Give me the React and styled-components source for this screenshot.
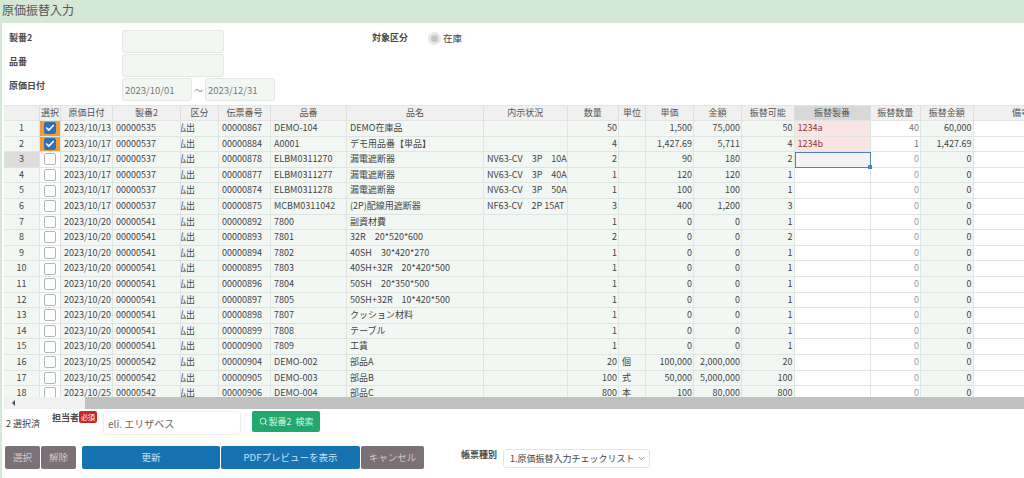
import React from 'react'
import styled, { createGlobalStyle } from 'styled-components'
import { Search, Check, ChevronDown } from 'lucide-react'

const GlobalStyle = createGlobalStyle`
html, body {
  margin: 0;
  padding: 0;
  background: white;
}
body {
  font-family: "Noto Sans CJK JP", "Noto Sans", sans-serif;
  color: #444;
  overflow: hidden;
}
`

const COLUMNS = '36px 21px 52px 68px 38px 52px 76px 137px 83.5px 51.5px 27px 48px 48px 52.5px 76px 50.5px 52.5px 96px'

const Page = styled.div`
  width: 1024px;
  height: 478px;
  overflow: hidden;
`

const TitleBar = styled.div`
  height: 23px;
  padding-left: 2px;
  background: #d5e8d5;
  font-size: 12px;
  line-height: 20px;
  color: #555;
`

const Content = styled.div`
  border-left: 2px solid #d5e8d5;
  height: 455px;
`

const Form = styled.div`
  height: 82px;
  padding-top: 7px;
  box-sizing: border-box;
  display: flex;
  flex-direction: column;
  gap: 1px;
`

const FormRow = styled.div`
  display: flex;
  align-items: flex-start;
`

const Label = styled.div`
  width: 120px;
  padding: 1px 0 0 7px;
  box-sizing: border-box;
  font-size: 9px;
  line-height: 14px;
  font-weight: 700;
  color: #4a4a4a;
`

const FieldBox = styled.div`
  width: ${p => p.$w}px;
  height: 23px;
  box-sizing: border-box;
  border: 1px solid #e3e8e4;
  border-radius: 3px;
  background: #f2f7f4;
  padding-left: 2px;
  font-size: 9.5px;
  line-height: 23px;
  color: #777;
`

const Tilde = styled.span`
  width: 13px;
  text-align: center;
  font-size: 9px;
  line-height: 25px;
  color: #888;
`

const TargetLabel = styled.div`
  margin-left: 148px;
  padding-top: 1px;
  width: 50px;
  font-size: 9px;
  line-height: 14px;
  font-weight: 700;
  color: #4a4a4a;
`

const Radio = styled.span`
  margin-left: 6px;
  margin-top: 2px;
  width: 13px;
  height: 13px;
  box-sizing: border-box;
  border: 2px solid #e6e6e6;
  border-radius: 50%;
  background: #c4c4c4;
  box-shadow: inset 0 0 0 1px #eeeeee;
`

const RadioText = styled.span`
  margin-left: 2px;
  font-size: 9.5px;
  line-height: 17px;
`

const TableWrap = styled.div`
  margin-left: 2px;
  height: 292px;
  overflow: hidden;
`

const Row = styled.div`
  display: grid;
  grid-template-columns: ${COLUMNS};
  width: 1026px;
  height: ${p => (p.$head ? 16 : 15.6)}px;
`

const HeadCell = styled.div`
  box-sizing: border-box;
  background: ${p => (p.$active ? '#d8d8d8' : '#f0f0f0')};
  border-right: 1px solid #dedede;
  border-bottom: 1px solid #e4e4e4;
  border-top: 1px solid #e4e4e4;
  font-size: 9px;
  line-height: 14px;
  text-align: center;
  color: #555;
  white-space: nowrap;
  overflow: hidden;
`

const Cell = styled.div`
  box-sizing: border-box;
  background: ${p => p.$bg || '#f2f7f4'};
  border-right: 1px solid #dfe6e2;
  border-bottom: 1px solid #dfe6e2;
  padding: 0 ${p => (p.$right ? '1px' : '3px')} 0 3px;
  font-size: 9px;
  line-height: 14.6px;
  text-align: ${p => (p.$right ? 'right' : 'left')};
  color: ${p => p.$color || '#444'};
  white-space: pre;
  overflow: hidden;
`

const RowNumber = styled(Cell)`
  background: ${p => (p.$current ? '#dcdcdc' : '#f2f7f4')};
  text-align: center;
  padding: 0;
`

const CheckCell = styled(Cell)`
  display: flex;
  align-items: center;
  justify-content: center;
  padding: 0;
  background: ${p => (p.$on ? '#f39a3c' : 'white')};
`

const CheckBox = styled.span`
  width: 12px;
  height: 12px;
  box-sizing: border-box;
  display: flex;
  align-items: center;
  justify-content: center;
  border-radius: 2px;
  border: 1px solid ${p => (p.$on ? '#2f6fb5' : '#b4b4b4')};
  background: ${p => (p.$on ? '#2f6fb5' : 'white')};
  color: white;
`

const ClippedText = styled.span`
  margin-left: -7px;
`

const EditCell = styled(Cell)`
  position: relative;
  overflow: visible;
  background: #f3f3f3;
  border: 1px solid #4f7fc4;
`

const Handle = styled.span`
  position: absolute;
  right: -2px;
  bottom: -2px;
  width: 4px;
  height: 4px;
  background: #4f7fc4;
`

const ScrollBar = styled.div`
  margin-left: 2px;
  height: 12px;
  display: flex;
  background: #f1f1f1;
`

const ScrollArrow = styled.div`
  width: 81px;
  display: flex;
  align-items: center;
  padding-left: 8px;
  box-sizing: border-box;
  &::before {
    content: '';
    border-style: solid;
    border-width: 3px 3px 3px 0;
    border-color: transparent #505050 transparent transparent;
  }
`

const ScrollThumb = styled.div`
  flex: 1;
  background: #c1c1c1;
`

const SearchRow = styled.div`
  height: 37px;
  box-sizing: border-box;
  padding: 2px 0 0 4px;
  display: flex;
  align-items: flex-start;
`

const SelectedCount = styled.div`
  width: 46px;
  margin-top: 6px;
  font-size: 9px;
  line-height: 14px;
`

const Person = styled.div`
  font-size: 9px;
  font-weight: 700;
  line-height: 14px;
  color: #4a4a4a;
`

const Badge = styled.span`
  width: 18px;
  height: 12px;
  border-radius: 2px;
  background: #c9252b;
  color: white;
  font-size: 7px;
  line-height: 12px;
  text-align: center;
`

const PersonInput = styled.div`
  width: 138px;
  height: 24px;
  margin-left: 6px;
  box-sizing: border-box;
  border: 1px solid #eceeed;
  border-radius: 3px;
  padding-left: 4px;
  font-size: 10px;
  line-height: 23px;
  color: #666;
`

const SearchButton = styled.div`
  width: 68px;
  height: 21px;
  margin-left: 11px;
  display: flex;
  align-items: center;
  justify-content: center;
  gap: 1px;
  background: #21a86c;
  border-radius: 2px;
  color: #d8f3e6;
  font-size: 9px;
  white-space: pre;
`

const ActionRow = styled.div`
  display: flex;
  align-items: flex-start;
  padding-left: 3px;
`

const ActionButton = styled.div`
  width: ${p => p.$w}px;
  height: 23px;
  margin-left: ${p => p.$gap || 0}px;
  margin-right: 1px;
  box-sizing: border-box;
  border-radius: 2px;
  background: ${p => (p.$primary ? '#1672b0' : '#7a7076')};
  color: ${p => (p.$primary ? '#cfe3f1' : '#cfc9cc')};
  font-size: 9.5px;
  line-height: 22px;
  text-align: center;
`

const ReportLabel = styled.div`
  margin-left: 36px;
  margin-top: 2px;
  width: 42px;
  font-size: 9px;
  line-height: 14px;
  font-weight: 700;
  color: #4a4a4a;
`

const SelectWrap = styled.div`
  position: relative;
  width: 147px;
  height: 19px;
  margin-top: 3px;
  color: #666;
  svg {
    position: absolute;
    right: 4px;
    top: 5px;
    pointer-events: none;
  }
`

const ReportSelect = styled.select`
  display: block;
  appearance: none;
  box-sizing: border-box;
  width: 100%;
  height: 100%;
  border: 1px solid #e4e4e4;
  border-radius: 3px;
  background: white;
  font-family: inherit;
  font-size: 9px;
  color: #444;
  padding: 0 0 0 6px;
`

const HEADERS = ['', '選択', '原価日付', '製番2', '区分', '伝票番号', '品番', '品名', '内示状況', '数量', '単位', '単価', '金額', '振替可能', '振替製番', '振替数量', '振替金額', '備考']

const make = (date, seiban, den, hin, name, naiji, qty, unit, tanka, kin, kano, fs = '', fq = '0', fk = '0') =>
  ({ date, seiban, den, hin, name, naiji, qty, unit, tanka, kin, kano, fs, fq, fk })

const ROWS = [
  make('2023/10/13', '00000535', '00000867', 'DEMO-104', 'DEMO在庫品', '', '50', '', '1,500', '75,000', '50', '1234a', '40', '60,000'),
  make('2023/10/17', '00000537', '00000884', 'A0001', 'デモ用品番【単品】', '', '4', '', '1,427.69', '5,711', '4', '1234b', '1', '1,427.69'),
  make('2023/10/17', '00000537', '00000878', 'ELBM0311270', '漏電遮断器', 'NV63-CV　3P　10A', '2', '', '90', '180', '2'),
  make('2023/10/17', '00000537', '00000877', 'ELBM0311277', '漏電遮断器', 'NV63-CV　3P　40A', '1', '', '120', '120', '1'),
  make('2023/10/17', '00000537', '00000874', 'ELBM0311278', '漏電遮断器', 'NV63-CV　3P　50A', '1', '', '100', '100', '1'),
  make('2023/10/17', '00000537', '00000875', 'MCBM0311042', '(2P)配線用遮断器', 'NF63-CV　2P 15AT', '3', '', '400', '1,200', '3'),
  make('2023/10/20', '00000541', '00000892', '7800', '副資材費', '', '1', '', '0', '0', '1'),
  make('2023/10/20', '00000541', '00000893', '7801', '32R　20*520*600', '', '2', '', '0', '0', '2'),
  make('2023/10/20', '00000541', '00000894', '7802', '40SH　30*420*270', '', '1', '', '0', '0', '1'),
  make('2023/10/20', '00000541', '00000895', '7803', '40SH+32R　20*420*500', '', '1', '', '0', '0', '1'),
  make('2023/10/20', '00000541', '00000896', '7804', '50SH　20*350*500', '', '1', '', '0', '0', '1'),
  make('2023/10/20', '00000541', '00000897', '7805', '50SH+32R　10*420*500', '', '1', '', '0', '0', '1'),
  make('2023/10/20', '00000541', '00000898', '7807', 'クッション材料', '', '1', '', '0', '0', '1'),
  make('2023/10/20', '00000541', '00000899', '7808', 'テーブル', '', '1', '', '0', '0', '1'),
  make('2023/10/20', '00000541', '00000900', '7809', '工賃', '', '1', '', '0', '0', '1'),
  make('2023/10/25', '00000542', '00000904', 'DEMO-002', '部品A', '', '20', '個', '100,000', '2,000,000', '20'),
  make('2023/10/25', '00000542', '00000905', 'DEMO-003', '部品B', '', '100', '式', '50,000', '5,000,000', '100'),
  make('2023/10/25', '00000542', '00000906', 'DEMO-004', '部品C', '', '800', '本', '100', '80,000', '800'),
]

const App = () => {
  return (
    <Page>
      <GlobalStyle />
      <TitleBar>原価振替入力</TitleBar>
      <Content>
        <Form>
          <FormRow>
            <Label>製番2</Label>
            <FieldBox $w={102} />
            <TargetLabel>対象区分</TargetLabel>
            <Radio />
            <RadioText>在庫</RadioText>
          </FormRow>
          <FormRow>
            <Label>品番</Label>
            <FieldBox $w={102} />
          </FormRow>
          <FormRow>
            <Label>原価日付</Label>
            <FieldBox $w={70}>2023/10/01</FieldBox>
            <Tilde>～</Tilde>
            <FieldBox $w={70}>2023/12/31</FieldBox>
          </FormRow>
        </Form>

        <TableWrap>
          <Row $head>
            {HEADERS.map((h, i) => (
              <HeadCell key={i} $active={h === '振替製番'}>{h}</HeadCell>
            ))}
          </Row>
          {ROWS.map((r, i) => {
            const on = i < 2
            const current = i === 2
            return (
              <Row key={i}>
                <RowNumber $current={current}>{i + 1}</RowNumber>
                <CheckCell $on={on}>
                  <CheckBox $on={on}>{on && <Check size={10} strokeWidth={4} />}</CheckBox>
                </CheckCell>
                <Cell>{r.date}</Cell>
                <Cell>{r.seiban}</Cell>
                <Cell><ClippedText>払出</ClippedText></Cell>
                <Cell>{r.den}</Cell>
                <Cell>{r.hin}</Cell>
                <Cell>{r.name}</Cell>
                <Cell>{r.naiji}</Cell>
                <Cell $right>{r.qty}</Cell>
                <Cell>{r.unit}</Cell>
                <Cell $right>{r.tanka}</Cell>
                <Cell $right>{r.kin}</Cell>
                <Cell $right>{r.kano}</Cell>
                {current ? (
                  <EditCell><Handle /></EditCell>
                ) : (
                  <Cell $bg={on ? '#fbe4e4' : 'white'} $color="#8a3b3b">{r.fs}</Cell>
                )}
                <Cell $right $bg="white" $color={on ? '#777' : '#999'}>{r.fq}</Cell>
                <Cell $right>{r.fk}</Cell>
                <Cell $bg="white" />
              </Row>
            )
          })}
        </TableWrap>
        <ScrollBar>
          <ScrollArrow />
          <ScrollThumb />
        </ScrollBar>

        <SearchRow>
          <SelectedCount>2 選択済</SelectedCount>
          <Person>担当者</Person>
          <Badge>必須</Badge>
          <PersonInput>eli. エリザベス</PersonInput>
          <SearchButton><Search size={9} strokeWidth={2.5} />製番2  検索</SearchButton>
        </SearchRow>

        <ActionRow>
          <ActionButton $w={35}>選択</ActionButton>
          <ActionButton $w={35}>解除</ActionButton>
          <ActionButton $w={138} $gap={5} $primary>更新</ActionButton>
          <ActionButton $w={139} $primary>PDFプレビューを表示</ActionButton>
          <ActionButton $w={63}>キャンセル</ActionButton>
          <ReportLabel>帳票種別</ReportLabel>
          <SelectWrap>
            <ReportSelect defaultValue="1">
              <option value="1">1.原価振替入力チェックリスト</option>
            </ReportSelect>
            <ChevronDown size={9} strokeWidth={2} />
          </SelectWrap>
        </ActionRow>
      </Content>
    </Page>
  )
}

export default App
